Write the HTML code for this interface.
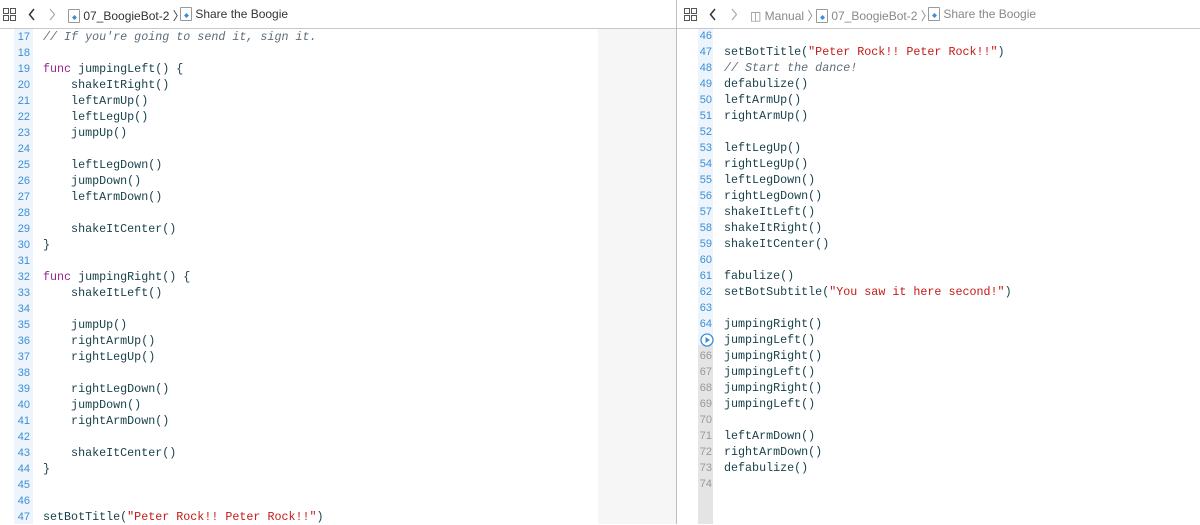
<!DOCTYPE html>
<html><head><meta charset="utf-8"><style>
*{margin:0;padding:0;box-sizing:border-box}
body{width:1200px;height:524px;overflow:hidden;background:#fff;position:relative;font-family:"Liberation Sans",sans-serif}
.hdr{position:absolute;top:0;height:29px;border-bottom:1px solid #c8c8c8;background:#fff;font-size:12px;color:#333}
.hdr span{position:absolute;top:7px;white-space:nowrap}
.hdr svg{position:absolute}
.ln{position:absolute;font:11.7px/16px "Liberation Mono",monospace;white-space:pre;color:#163f4a}
.num{position:absolute;font:11px/16px "Liberation Sans",sans-serif;color:#3b8fd8;text-align:right;width:22px}
.g{color:#999}
.k{color:#9b2393}
.c{color:#5d6c79;font-style:italic}
.s{color:#c41a16}
.doc{display:inline-block;width:12px;height:14px;border:1px solid #999;border-radius:1px;vertical-align:-3px;position:relative;background:#fff}
.doc:after{content:"";position:absolute;left:3px;top:5px;width:5px;height:5px;background:#3b8fd8;transform:rotate(45deg) scale(.7)}
</style></head><body>
<div style="position:absolute;left:14px;top:29px;width:19px;height:495px;background:#edf4fb"></div>
<div style="position:absolute;left:598px;top:29px;width:78px;height:495px;background:#f6f6f6"></div>
<div style="position:absolute;left:676px;top:0;width:1px;height:524px;background:#bdbdbd"></div>
<div style="position:absolute;left:698px;top:29px;width:15px;height:316px;background:#edf4fb"></div>
<div style="position:absolute;left:698px;top:345px;width:15px;height:179px;background:#e4e4e4"></div>

<div class="hdr" style="left:0;width:676px">
<svg style="left:3px;top:8px" width="13" height="13" fill="none" stroke="#555" stroke-width="1"><rect x=".5" y=".5" width="5" height="5"/><rect x="7.5" y=".5" width="5" height="5"/><rect x=".5" y="7.5" width="5" height="5"/><rect x="7.5" y="7.5" width="5" height="5"/></svg>
<svg style="left:28px;top:8px" width="8" height="13" fill="none" stroke="#333" stroke-width="1.5"><path d="M6 1 L1.5 6.5 L6 12"/></svg>
<svg style="left:48px;top:8px" width="8" height="13" fill="none" stroke="#aaa" stroke-width="1.2"><path d="M2 1 L6.5 6.5 L2 12"/></svg>
<span style="left:68px"><i class="doc"></i> 07_BoogieBot-2 〉</span>
<span style="left:180px"><i class="doc"></i> Share the Boogie</span>
</div>
<div class="hdr" style="left:677px;width:523px">
<svg style="left:7px;top:8px" width="13" height="13" fill="none" stroke="#555" stroke-width="1"><rect x=".5" y=".5" width="5" height="5"/><rect x="7.5" y=".5" width="5" height="5"/><rect x=".5" y="7.5" width="5" height="5"/><rect x="7.5" y="7.5" width="5" height="5"/></svg>
<svg style="left:32px;top:8px" width="8" height="13" fill="none" stroke="#333" stroke-width="1.5"><path d="M6 1 L1.5 6.5 L6 12"/></svg>
<svg style="left:53px;top:8px" width="8" height="13" fill="none" stroke="#aaa" stroke-width="1.2"><path d="M2 1 L6.5 6.5 L2 12"/></svg>
<span style="left:73px;color:#888">◫ Manual 〉</span>
<span style="left:139px;color:#888"><i class="doc"></i> 07_BoogieBot-2 〉</span>
<span style="left:251px;color:#888"><i class="doc"></i> Share the Boogie</span>
</div>

<div id="L"></div>
<script>
var L=[
[17,'<span class="c">// If you\'re going to send it, sign it.</span>'],
[18,''],[19,'<span class="k">func</span> jumpingLeft() {'],
[20,'    shakeItRight()'],[21,'    leftArmUp()'],[22,'    leftLegUp()'],[23,'    jumpUp()'],[24,''],
[25,'    leftLegDown()'],[26,'    jumpDown()'],[27,'    leftArmDown()'],[28,''],[29,'    shakeItCenter()'],[30,'}'],[31,''],
[32,'<span class="k">func</span> jumpingRight() {'],[33,'    shakeItLeft()'],[34,''],[35,'    jumpUp()'],[36,'    rightArmUp()'],[37,'    rightLegUp()'],[38,''],
[39,'    rightLegDown()'],[40,'    jumpDown()'],[41,'    rightArmDown()'],[42,''],[43,'    shakeItCenter()'],[44,'}'],[45,''],[46,''],
[47,'setBotTitle(<span class="s">"Peter Rock!! Peter Rock!!"</span>)']];
var h='';
L.forEach(function(a){var t=29+(a[0]-17)*16;
h+='<div class="num" style="left:8px;top:'+t+'px">'+a[0]+'</div><div class="ln" style="left:43px;top:'+t+'px">'+a[1]+'</div>';});
var R=[[46,''],[47,'setBotTitle(<span class="s">"Peter Rock!! Peter Rock!!"</span>)'],[48,'<span class="c">// Start the dance!</span>'],
[49,'defabulize()'],[50,'leftArmUp()'],[51,'rightArmUp()'],[52,''],[53,'leftLegUp()'],[54,'rightLegUp()'],[55,'leftLegDown()'],
[56,'rightLegDown()'],[57,'shakeItLeft()'],[58,'shakeItRight()'],[59,'shakeItCenter()'],[60,''],[61,'fabulize()'],
[62,'setBotSubtitle(<span class="s">"You saw it here second!"</span>)'],[63,''],[64,'jumpingRight()'],[65,'jumpingLeft()'],
[66,'jumpingRight()'],[67,'jumpingLeft()'],[68,'jumpingRight()'],[69,'jumpingLeft()'],[70,''],[71,'leftArmDown()'],
[72,'rightArmDown()'],[73,'defabulize()'],[74,'']];
R.forEach(function(a){var t=28+(a[0]-46)*16;
var n=a[0]==65?'<svg width="14" height="14" style="position:absolute;left:10px;top:1px"><circle cx="7" cy="7" r="6" fill="#fff" stroke="#3b8fd8" stroke-width="1.3"/><path d="M5.5 4 L10 7 L5.5 10Z" fill="#3b8fd8"/></svg>':a[0];
h+='<div class="num'+(a[0]>65?' g':'')+'" style="left:690px;top:'+t+'px">'+n+'</div><div class="ln" style="left:724px;top:'+t+'px">'+a[1]+'</div>';});
document.getElementById('L').innerHTML=h;
</script>
</body></html>
